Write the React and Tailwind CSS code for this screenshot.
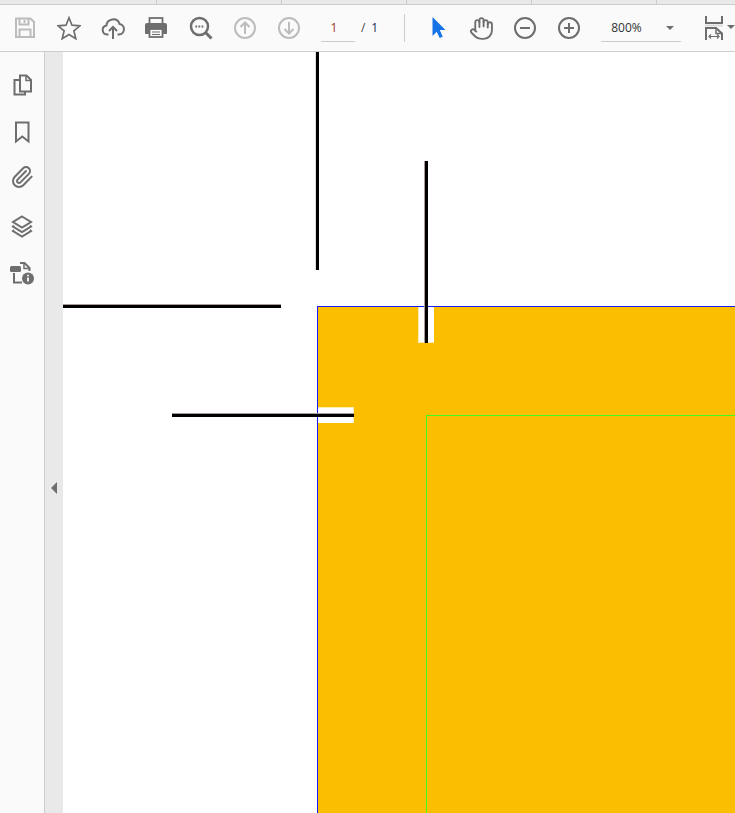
import React from 'react';
import { Hand, Paperclip } from 'lucide-react';

const Icon = ({ children, className = 'text-[#6e6e6e]' }) => (
  <svg width="24" height="24" viewBox="0 0 24 24" fill="none" stroke="currentColor" strokeWidth="2" className={className}>
    {children}
  </svg>
);

const Cell = ({ children }) => (
  <div className="w-[44px] h-[46px] flex items-center justify-center shrink-0">{children}</div>
);

const Caret = () => <div className="w-0 h-0 border-x-[4px] border-x-transparent border-t-[4px] border-t-[#6e6e6e]" />;

const SideItem = ({ children }) => (
  <div className="h-[47px] flex items-center justify-center shrink-0">{children}</div>
);

const App = () => {
  return (
    <div className="h-[813px] w-[735px] overflow-hidden flex flex-col bg-white font-['Open_Sans',sans-serif]">
      {/* tab strip */}
      <div className="h-[5px] shrink-0 flex bg-[#e9e9e9] border-b border-[#cdcdcd] pl-[156px]">
        <div className="w-[125px] border-l border-[#cdcdcd]" />
        <div className="w-[125px] border-l border-[#cdcdcd]" />
        <div className="w-[125px] border-l border-[#cdcdcd]" />
        <div className="w-[125px] border-l border-[#cdcdcd]" />
        <div className="w-[79px] border-l border-[#cdcdcd]" />
      </div>

      {/* toolbar */}
      <div className="h-[47px] shrink-0 flex items-start bg-[#fafafa] border-b border-[#cdcdcd] pl-[3px]">
        <Cell>
          <Icon className="text-[#bcbcbc]">
            <path d="M3 2.500h14.500l3.500 3.500v15H3z" />
            <path d="M6.500 3v5.500h9V3M11.500 4v3M6.500 21v-7.500h11V21" />
          </Icon>
        </Cell>
        <Cell>
          <Icon>
            <path strokeWidth="1.700" d="M12 1.800l3 7.400 8 .6-6.100 5.100 1.900 7.800-6.800-4.200-6.800 4.200 1.900-7.800L1 9.800l8-.6z" />
          </Icon>
        </Cell>
        <Cell>
          <Icon>
            <path d="M7.500 18.500H6a4.600 4.600 0 0 1-.6-9.100A6.800 6.800 0 0 1 18.600 8a5.300 5.300 0 0 1-.6 10.500h-1.500" />
            <path d="M12 23V11.500M8 15l4-4 4 4" />
          </Icon>
        </Cell>
        <Cell>
          <div className="-translate-x-[1px]">
            <Icon>
              <rect x="5.500" y="2" width="13" height="6" strokeWidth="1.800" />
              <path fill="currentColor" stroke="none" d="M3 7h18a2 2 0 0 1 2 2v8a1 1 0 0 1-1 1h-3v-5H5v5H2a1 1 0 0 1-1-1V9a2 2 0 0 1 2-2z" />
              <rect x="5.500" y="13" width="13" height="8" fill="#fafafa" strokeWidth="1.800" />
              <path strokeWidth="1.200" d="M8 16h8M8 18.500h8" />
            </Icon>
          </div>
        </Cell>
        <Cell>
          <Icon>
            <circle cx="10.500" cy="10.500" r="8.500" strokeWidth="2.500" />
            <path strokeWidth="3" d="M16.500 16.500l6 6" />
            <path strokeWidth="1.800" strokeDasharray="1.800 1.300" d="M6.300 10.500h8.500" />
          </Icon>
        </Cell>
        <Cell>
          <Icon className="text-[#bcbcbc]">
            <circle cx="12" cy="12" r="10" />
            <path d="M12 18V6.500M7.500 11l4.500-4.500 4.500 4.500" />
          </Icon>
        </Cell>
        <Cell>
          <Icon className="text-[#bcbcbc]">
            <circle cx="12" cy="12" r="10" />
            <path d="M12 6v11.500M7.500 13l4.500 4.500 4.500-4.500" />
          </Icon>
        </Cell>

        {/* page number */}
        <div className="ml-[10px] w-[34px] h-[37px] flex items-center justify-center pt-[10px] pr-[8px] border-b border-[#cdcdcd] text-[12px] text-[#a03a20]">1</div>
        <div className="ml-[6px] h-[46px] flex items-center text-[12px] text-[#444]">/</div>
        <div className="ml-[6px] h-[46px] flex items-center text-[12px] text-[#1f2d5c]">1</div>
        <div className="ml-[26px] mt-[9px] w-px h-[28px] bg-[#cdcdcd] shrink-0" />

        <div className="ml-[10px] flex">
          <Cell>
            <svg width="24" height="24" viewBox="0 0 24 24" className="text-[#1473e6] translate-x-[2px]">
              <path fill="currentColor" d="M5.500 1L18.500 14H12.800L15.700 20.800L12.700 22L9.700 15.800L5.500 20Z" />
            </svg>
          </Cell>
          <Cell>
            <Hand size={25} strokeWidth={1.800} className="text-[#6e6e6e]" />
          </Cell>
          <Cell>
            <Icon>
              <circle cx="12" cy="12" r="10" />
              <path d="M7 12h10" />
            </Icon>
          </Cell>
          <Cell>
            <Icon>
              <circle cx="12" cy="12" r="10" />
              <path d="M7 12h10M12 7v10" />
            </Icon>
          </Cell>
        </div>

        {/* zoom select */}
        <div className="ml-[10px] w-[80px] h-[37px] flex items-center justify-between pl-[10px] pr-[7px] pt-[10px] border-b border-[#cdcdcd] text-[12px] text-[#333]">
          <span>800%</span>
          <Caret />
        </div>

        {/* fit width */}
        <div className="ml-[23px] w-[20px] h-[46px] relative shrink-0">
          <svg width="20" height="30" viewBox="0 0 20 30" fill="none" stroke="#6e6e6e" strokeWidth="2" className="mt-[10px]">
            <path d="M2 1v7M18 1v7" />
            <path d="M1 8h18" />
            <path d="M1 10.500h18" stroke="#dcdcdc" />
            <path d="M2 25V13h10l6 5.500V25" />
            <path d="M12 13v5.500h6" strokeWidth="1.500" />
            <path strokeWidth="1.200" d="M5 21.500h10M7 19.500l-2 2 2 2M13 19.500l2 2-2 2" />
          </svg>
        </div>
        <div className="ml-[3px] mt-[20px] shrink-0"><Caret /></div>
      </div>

      <div className="flex-1 flex min-h-0">
        {/* left rail */}
        <div className="w-[45px] shrink-0 flex flex-col pt-[9px] bg-[#fafafa] border-r border-[#cdcdcd]">
          <SideItem>
            <Icon>
              <path d="M10 2.500h6.500L21 7v11.500H10z" />
              <path d="M16 3v4.500h5" strokeWidth="1.500" />
              <path d="M9 7H4.500v14.500H15v-3" />
            </Icon>
          </SideItem>
          <SideItem>
            <Icon>
              <path d="M6 2.500h12.500v19l-6.250-5-6.250 5z" />
            </Icon>
          </SideItem>
          <SideItem>
            <div className="-mt-[3px]">
              <Paperclip size={24} strokeWidth={2} className="text-[#6e6e6e]" />
            </div>
          </SideItem>
          <SideItem>
            <Icon>
              <path d="M12 2.500l9 5.500-9 5.500L3 8z" />
              <path d="M4 11.500L3 12.500l9 5.500 9-5.500-1-1" />
              <path d="M4 16L3 17l9 5.500 9-5.500-1-1" />
            </Icon>
          </SideItem>
          <SideItem>
            <svg width="26" height="24" viewBox="0 0 26 24" fill="none" stroke="#6e6e6e" strokeWidth="2">
              <path d="M11 2h4.500l5 5v3" />
              <path d="M15 2v5.500h5.500" strokeWidth="1.500" />
              <path d="M5 12v9.500h8" />
              <rect x="1" y="5" width="11" height="6" rx="1.500" fill="#6e6e6e" stroke="none" />
              <circle cx="19" cy="17.500" r="6" fill="#6e6e6e" stroke="none" />
              <path stroke="#fafafa" strokeWidth="1.800" d="M19 16.500v4M19 13.800v1.500" />
            </svg>
          </SideItem>
        </div>

        {/* collapse strip */}
        <div className="w-[18px] shrink-0 bg-[#e9e9e9] flex items-center justify-center pt-[110px] pr-[1px]">
          <div className="w-0 h-0 border-y-[6px] border-y-transparent border-r-[6px] border-r-[#6e6e6e]" />
        </div>

        {/* page canvas: drawing coordinates are the content here */}
        <div className="relative flex-1 bg-white overflow-hidden">
          <div className="absolute left-[254px] top-[254px] w-[500px] h-[600px] bg-[#fbbe00] border-l border-t border-[#1a1aff]" />
          <div className="absolute left-[363px] top-[363px] w-[400px] h-[500px] border-l border-t border-[#3dff20]" />
          <div className="absolute left-[355px] top-[255px] w-[16px] h-[36px] bg-white border-l border-b border-[#fdecb0]" />
          <div className="absolute left-[255px] top-[355px] w-[36px] h-[16px] bg-white border-t border-r border-[#fdecb0]" />
          <div className="absolute left-[252px] top-0 w-[4px] h-[218px] bg-black border-l border-[#e2dedc]" />
          <div className="absolute left-[361px] top-[109px] w-[4px] h-[182px] bg-black border-l border-[#a89c98]" />
          <div className="absolute left-0 top-[252px] w-[218px] h-[4px] bg-black border-t border-[#a89c98]" />
          <div className="absolute left-[109px] top-[361px] w-[182px] h-[4px] bg-black border-t border-[#a89c98]" />
        </div>
      </div>
    </div>
  );
};

export default App;
